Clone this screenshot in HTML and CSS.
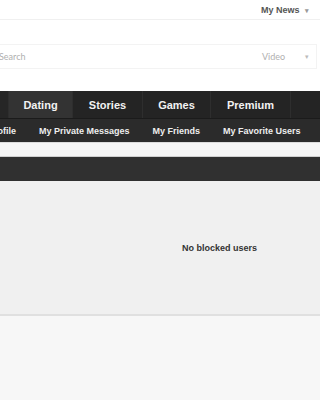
FILE: index.html
```html
<!DOCTYPE html>
<html lang="en">
<head>
    <meta charset="UTF-8">
    <title>Blocked users</title>
    <link rel="stylesheet" href="styles.css">
</head>
<body>

<div class="topbar">
    <span class="mynews">My News <span class="caret">&#9662;</span></span>
</div>

<div class="search-row">
    <div class="search-box">
        <span class="search-text">Search</span>
        <span class="search-type">Video</span>
        <span class="caret light">&#9662;</span>
    </div>
</div>

<div class="nav">
    <a class="tab first"></a>
    <a class="tab active">Dating</a>
    <a class="tab">Stories</a>
    <a class="tab">Games</a>
    <a class="tab">Premium</a>
</div>
<div class="subnav">
    <a class="sub profile">My Profile</a>
    <a class="sub">My Private Messages</a>
    <a class="sub">My Friends</a>
    <a class="sub">My Favorite Users</a>
</div>

<div class="strip"></div>
<div class="darkbar"></div>

<div class="content">
    <p class="empty">No blocked users</p>
</div>
<div class="footer"></div>

</body>
</html>
```

FILE: styles.css
```css
body {
    margin: 0;
    background-color: #f7f7f7;
    font-family: "Liberation Sans", Arial, sans-serif;
}
.topbar {
    height: 19px;
    background-color: #fff;
    border-bottom: 1px solid #f0f0f0;
    display: flex;
    justify-content: flex-end;
    align-items: center;
    padding-right: 11px;
}
.mynews {
    font-size: 9px;
    font-weight: bold;
    color: #555;
}
.caret {
    font-size: 7px;
    color: #999;
    margin-left: 3px;
}
.caret.light {
    color: #bbb;
}
.search-row {
    background-color: #fff;
    height: 71px;
    display: flex;
    align-items: center;
}
.search-box {
    display: flex;
    align-items: center;
    width: 316px;
    height: 23px;
    margin-top: 1px;
    border: 1px solid #f3f3f3;
    border-left: none;
    font-family: Lato, sans-serif;
    font-size: 9px;
    color: #b0b0b0;
}
.search-text {
    margin-left: -1px;
    flex: 1;
}
.search-type {
    width: 40px;
}
.search-box .caret {
    margin-right: 7px;
}
.nav {
    display: flex;
    height: 27px;
    background-color: #242424;
    border-bottom: 1px solid #1b1b1b;
}
.tab {
    display: flex;
    align-items: center;
    justify-content: center;
    font-size: 11px;
    font-weight: bold;
    color: #f2f2f2;
    border-right: 1px solid #2e2e2e;
}
.tab.first {
    width: 8px;
    background-color: #262626;
}
.tab.active {
    width: 63px;
    background-color: #333;
}
.tab:nth-child(3) {
    width: 69px;
}
.tab:nth-child(4) {
    width: 67px;
}
.tab:nth-child(5) {
    width: 79px;
}
.subnav {
    display: flex;
    height: 23px;
    align-items: center;
    background-color: #2b2b2b;
    gap: 23px;
    white-space: nowrap;
}
.sub {
    font-size: 9px;
    font-weight: bold;
    color: #eee;
}
.sub.profile {
    margin-left: -27px;
}
.strip {
    height: 13px;
    background-color: #f5f5f5;
    border-top: 1px solid #dcdcdc;
    border-bottom: 1px solid #cfcfcf;
}
.darkbar {
    height: 24px;
    background-color: #303030;
}
.content {
    height: 133px;
    background-color: #f0f0f0;
    border-bottom: 2px solid #e0e0e0;
    display: flex;
    align-items: center;
    padding-left: 182px;
}
.empty {
    margin: 0;
    font-size: 9px;
    font-weight: bold;
    color: #333;
}
.footer {
    height: 80px;
}
```
